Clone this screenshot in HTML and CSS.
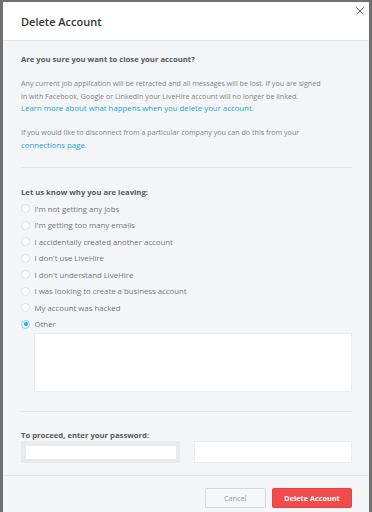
FILE: index.html
```html
<!DOCTYPE html>
<html>
<head>
<meta charset="utf-8">
<link rel="stylesheet" href="styles.css">
</head>
<body>
<div class="modal">
  <div class="modal-header">
    <h1 class="title">Delete Account</h1>
    <svg class="close" width="8" height="8" viewBox="0 0 8 8"><path d="M0.5 0.5L7.5 7.5M7.5 0.5L0.5 7.5" stroke="#444" stroke-width="0.9" fill="none"/></svg>
  </div>
  <div class="modal-body">
    <p class="heading">Are you sure you want to close your account?</p>
    <p class="para">Any current job application will be retracted and all messages will be lost. If you are signed<br>in with Facebook, Google or LinkedIn your LiveHire account will no longer be linked.<br><a class="link">Learn more about what happens when you delete your account.</a></p>
    <p class="para para2">If you would like to disconnect from a particular company you can do this from your<br><a class="link">connections page.</a></p>
    <div class="divider d1"></div>
    <p class="heading h2">Let us know why you are leaving:</p>
    <ul class="reasons">
      <li class="reason"><span class="radio"></span>I'm not getting any jobs</li>
      <li class="reason"><span class="radio"></span>I'm getting too many emails</li>
      <li class="reason"><span class="radio"></span>I accidentally created another account</li>
      <li class="reason"><span class="radio"></span>I don't use LiveHire</li>
      <li class="reason"><span class="radio"></span>I don't understand LiveHire</li>
      <li class="reason"><span class="radio"></span>I was looking to create a business account</li>
      <li class="reason"><span class="radio"></span>My account was hacked</li>
      <li class="reason"><span class="radio checked"></span>Other</li>
    </ul>
    <div class="textarea"></div>
    <div class="divider d2"></div>
    <p class="heading h3">To proceed, enter your password:</p>
    <div class="inputs">
      <div class="input-gray"><div class="input-inner"></div></div>
      <div class="input-white"></div>
    </div>
  </div>
  <div class="modal-footer">
    <button class="btn cancel">Cancel</button>
    <button class="btn delete">Delete Account</button>
  </div>
</div>
</body>
</html>
```
FILE: styles.css
```css
html, body {
  margin: 0;
  padding: 0;
  height: 512px;
  overflow: hidden;
}
body {
  background: #707070;
  font-family: "Open Sans", "Noto Sans", sans-serif;
}
.modal {
  margin: 2px 0 0 3px;
  width: 366px;
  height: 520px;
  background: #f4f5f7;
  display: flex;
  flex-direction: column;
}
.modal-header {
  height: 38px;
  background: #fff;
  border-bottom: 1px solid #e4e5e7;
  display: flex;
  align-items: center;
  justify-content: space-between;
  padding: 0 0 0 18px;
  position: relative;
}
.title {
  margin: 0;
  font-size: 11px;
  font-weight: 600;
  color: #333;
}
.close {
  position: absolute;
  right: 5px;
  top: 5px;
}
.modal-body {
  padding: 12px 17px 0 18px;
  border-bottom: 1px solid #e4e5e7;
}
p { margin: 0; }
.heading {
  font-size: 7.7px;
  font-weight: 700;
  color: #5a5a5a;
  line-height: 12px;
}
.para {
  margin-top: 12px;
  font-size: 7.15px;
  line-height: 12.5px;
  color: #858585;
  white-space: nowrap;
}
.para2 { margin-top: 11.5px; }
.link { color: #1aa6dc; font-size: 7.8px; }
.divider {
  height: 1px;
  background: #e6e7e9;
}
.d1 { margin-top: 16px; }
.h2 { margin-top: 18px; }
.reasons {
  list-style: none;
  margin: 2.5px 0 0 0;
  padding: 0;
}
.reason {
  height: 16.5px;
  display: flex;
  align-items: center;
  font-size: 7.8px;
  color: #767676;
}
.radio {
  width: 7px;
  height: 7px;
  border: 0.6px solid #e0e0e0;
  border-radius: 50%;
  background: #fff;
  margin-right: 4.5px;
  box-sizing: content-box;
  display: flex;
  align-items: center;
  justify-content: center;
}
.radio.checked {
  border-color: #8fd6f2;
  background: #e4f6fd;
}
.radio.checked::after {
  content: "";
  width: 4px;
  height: 4px;
  border-radius: 50%;
  background: #11b0ec;
}
.textarea {
  margin-left: 12.5px;
  height: 59px;
  background: #fff;
  border: 1px solid #ececec;
  box-sizing: border-box;
}
.d2 { margin-top: 19px; }
.h3 { margin-top: 17px; }
.inputs {
  display: flex;
  gap: 14px;
  padding-bottom: 12.5px;
}
.input-gray {
  width: 159px;
  height: 22px;
  background: #e9eaec;
  padding: 5px 4px 3.5px 4.5px;
  box-sizing: border-box;
}
.input-inner {
  height: 100%;
  background: #fff;
}
.input-white {
  width: 158px;
  height: 22px;
  background: #fff;
  border: 1px solid #ededed;
  box-sizing: border-box;
}
.modal-footer {
  display: flex;
  justify-content: flex-end;
  gap: 6px;
  padding: 12px 17px 0 0;
}
.btn {
  height: 20px;
  font-family: inherit;
  font-size: 7.3px;
  border-radius: 1.5px;
  padding: 0;
  box-sizing: border-box;
}
.cancel {
  width: 61.5px;
  background: #f6f7f8;
  border: 1px solid #d9dadc;
  color: #9a9a9a;
}
.delete {
  width: 80px;
  background: #f24b4b;
  border: 1px solid #e94444;
  color: #fff;
  font-weight: 700;
}
```
